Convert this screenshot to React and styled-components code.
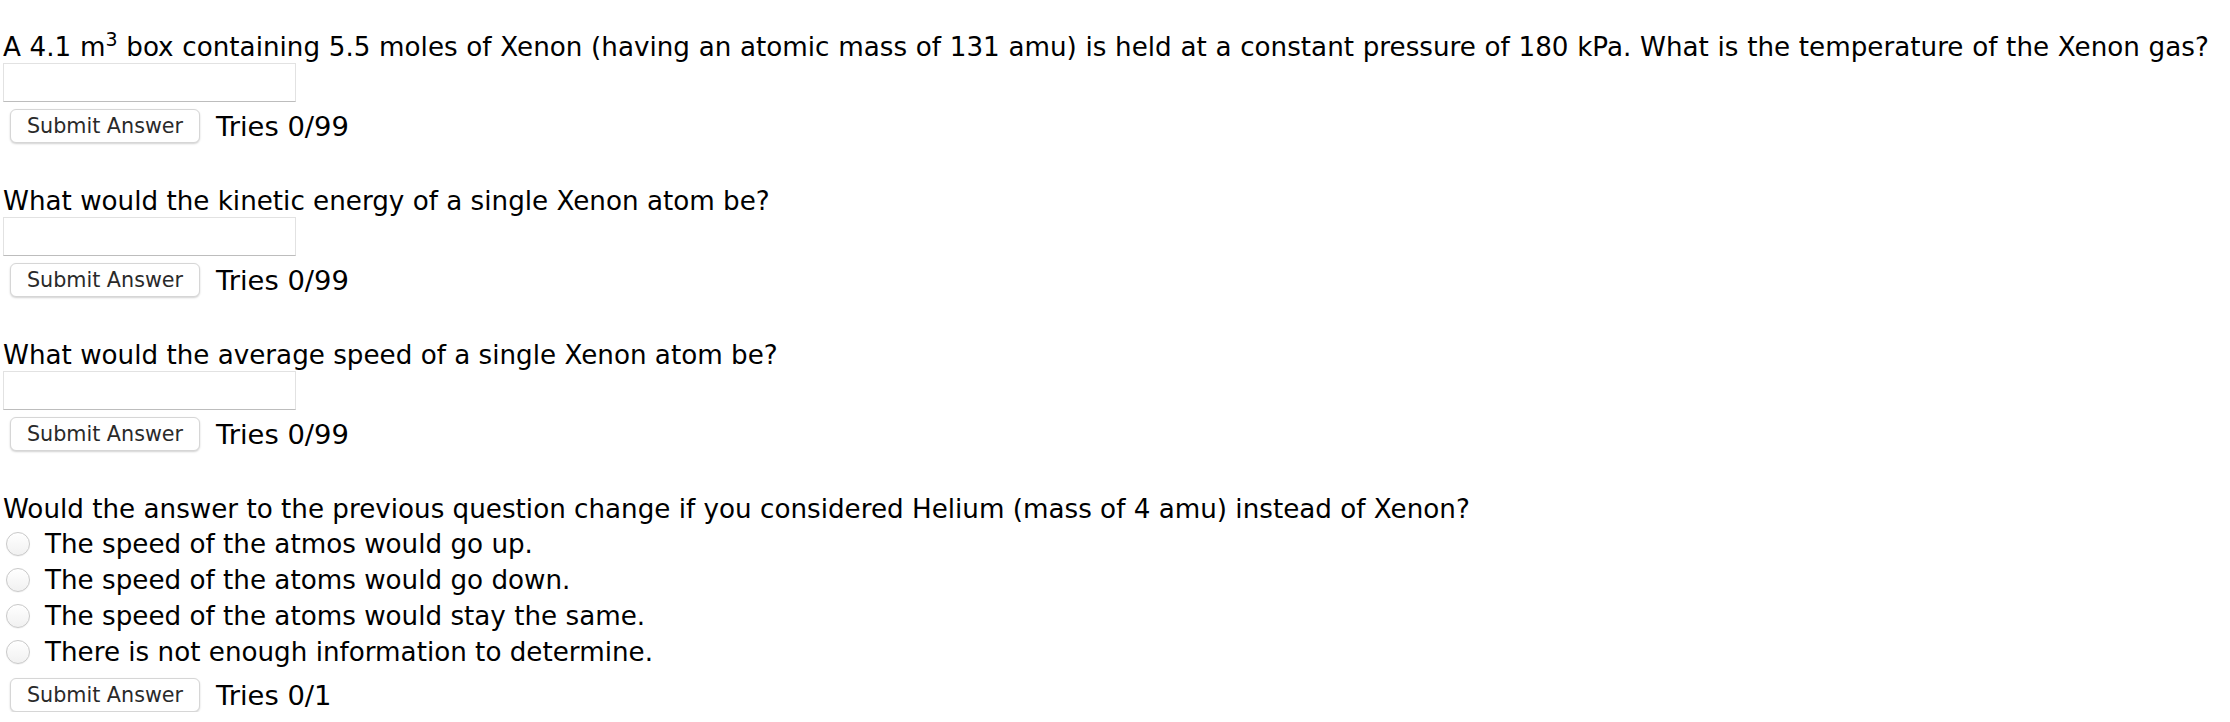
import React from "react";
import styled, { createGlobalStyle } from "styled-components";

const Global = createGlobalStyle`
  html, body { margin: 0; padding: 0; background: #fff; }
  body { font-family: "DejaVu Sans", Verdana, sans-serif; color: #000; }
`;

const Page = styled.div`
  padding: 33px 0 0 3px;
  display: flex;
  flex-direction: column;
`;

const Question = styled.div`
  display: flex;
  flex-direction: column;
  align-items: flex-start;
  margin-bottom: ${(p) => (p.$last ? 0 : 44)}px;
`;

const Prompt = styled.div`
  font-size: 26.2px;
  line-height: 29px;
  white-space: nowrap;
  word-spacing: ${(p) => p.$wordSpacing || 0}px;
  sup { font-size: 19px; line-height: 0; vertical-align: 10px; }
`;

const AnswerInput = styled.input`
  box-sizing: border-box;
  width: 293px;
  height: 39px;
  margin: 1px 0 0 0;
  border: 1px solid #e2e2e2;
  border-bottom-color: #bdbdbd;
  border-radius: 0;
  background: #fff;
  outline: none;
  font: inherit;
`;

const ActionRow = styled.div`
  display: flex;
  align-items: center;
  margin-top: ${(p) => p.$top}px;
`;

const SubmitButton = styled.button`
  box-sizing: border-box;
  width: 190px;
  height: 34px;
  margin-left: 7px;
  padding: 0;
  border: 1px solid #d6d6d6;
  border-radius: 6px;
  background: #fff;
  box-shadow: 0 1px 2px rgba(0, 0, 0, 0.18);
  font-family: "DejaVu Sans", Verdana, sans-serif;
  font-size: 20.7px;
  color: #2a2a2a;
`;

const Tries = styled.span`
  margin-left: 16px;
  font-size: 27.4px;
  line-height: 29px;
`;

const Options = styled.div`
  display: flex;
  flex-direction: column;
  margin-top: 2px;
`;

const Option = styled.label`
  display: flex;
  align-items: center;
  height: 36px;
  font-size: 26.2px;
  line-height: 29px;
  white-space: nowrap;
`;

const Radio = styled.input.attrs({ type: "radio" })`
  appearance: none;
  box-sizing: border-box;
  width: 24px;
  height: 24px;
  margin: 0 15px 0 3px;
  border: 1px solid #c9c9c9;
  border-radius: 50%;
  background: linear-gradient(#ffffff, #f1f1f1);
  box-shadow: inset 0 1px 1px rgba(255, 255, 255, 0.9), 0 0.5px 1px rgba(0, 0, 0, 0.08);
`;

const textQuestions = [
  {
    wordSpacing: 0.38,
    prompt: (
      <>
        A 4.1 m<sup>3</sup> box containing 5.5 moles of Xenon (having an atomic mass of 131 amu) is held at a constant pressure of 180 kPa. What is the temperature of the Xenon gas?
      </>
    ),
  },
  { prompt: "What would the kinetic energy of a single Xenon atom be?" },
  { prompt: "What would the average speed of a single Xenon atom be?" },
];

const options = [
  "The speed of the atmos would go up.",
  "The speed of the atoms would go down.",
  "The speed of the atoms would stay the same.",
  "There is not enough information to determine.",
];

export default function App() {
  return (
    <>
      <Global />
      <Page>
        {textQuestions.map((q, i) => (
          <Question key={i}>
            <Prompt $wordSpacing={q.wordSpacing}>{q.prompt}</Prompt>
            <AnswerInput type="text" />
            <ActionRow $top={7}>
              <SubmitButton>Submit Answer</SubmitButton>
              <Tries>Tries 0/99</Tries>
            </ActionRow>
          </Question>
        ))}
        <Question $last>
          <Prompt>
            Would the answer to the previous question change if you considered Helium (mass of 4 amu) instead of Xenon?
          </Prompt>
          <Options>
            {options.map((o) => (
              <Option key={o}>
                <Radio name="q4" />
                {o}
              </Option>
            ))}
          </Options>
          <ActionRow $top={8}>
            <SubmitButton>Submit Answer</SubmitButton>
            <Tries>Tries 0/1</Tries>
          </ActionRow>
        </Question>
      </Page>
    </>
  );
}
